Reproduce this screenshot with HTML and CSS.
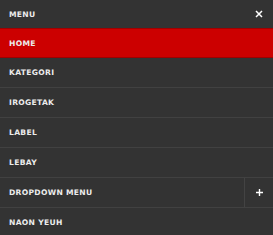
FILE: index.html
```html
<!DOCTYPE html>
<html lang="en">
<head>
    <meta charset="UTF-8">
    <meta name="viewport" content="width=device-width, initial-scale=1.0">
    <title>Menu</title>
    <link rel="stylesheet" href="styles.css">
</head>
<body>
    <nav class="menu">
        <div class="menu-head">
            <span class="menu-title">MENU</span>
            <svg class="menu-close" width="8" height="8" viewBox="0 0 8 8">
                <path d="M1 1 L7 7 M7 1 L1 7" stroke="#fff" stroke-width="1.5"/>
            </svg>
        </div>
        <ul class="menu-list">
            <li class="item active"><a href="#">HOME</a></li>
            <li class="item"><a href="#">KATEGORI</a></li>
            <li class="item"><a href="#">IROGETAK</a></li>
            <li class="item"><a href="#">LABEL</a></li>
            <li class="item"><a href="#">LEBAY</a></li>
            <li class="item has-sub">
                <a href="#">DROPDOWN MENU</a>
                <span class="toggle">
                    <svg width="7" height="7" viewBox="0 0 7 7">
                        <path d="M3.5 0 V7 M0 3.5 H7" stroke="#fff" stroke-width="1.4"/>
                    </svg>
                </span>
            </li>
            <li class="item"><a href="#">NAON YEUH</a></li>
        </ul>
    </nav>
</body>
</html>
```
FILE: styles.css
```css
body {
    margin: 0;
    background: #333333;
    font-family: "DejaVu Sans", sans-serif;
}
.menu {
    width: 273px;
    color: #ececec;
}
.menu-head {
    display: flex;
    justify-content: space-between;
    align-items: center;
    height: 28px;
    padding: 0 10px 0 9px;
}
.menu-title {
    font-size: 7.6px;
    font-weight: bold;
    letter-spacing: 0.3px;
}
.menu-list {
    list-style: none;
    margin: 0;
    padding: 0;
}
.item {
    display: flex;
    height: 29px;
    border-top: 1px solid #414141;
}
.item a {
    flex: 1;
    display: flex;
    align-items: center;
    padding: 0 9px;
    color: #ececec;
    text-decoration: none;
    font-size: 7.6px;
    font-weight: bold;
    letter-spacing: 0.3px;
}
.item.active {
    background: #cc0000;
    border-top: 1px solid #a00000;
    border-bottom: 1px solid #a00000;
    height: 28px;
}
.item.active + .item {
    border-top: none;
}
.toggle {
    width: 28px;
    display: flex;
    align-items: center;
    justify-content: center;
    border-left: 1px solid #434343;
}
```
